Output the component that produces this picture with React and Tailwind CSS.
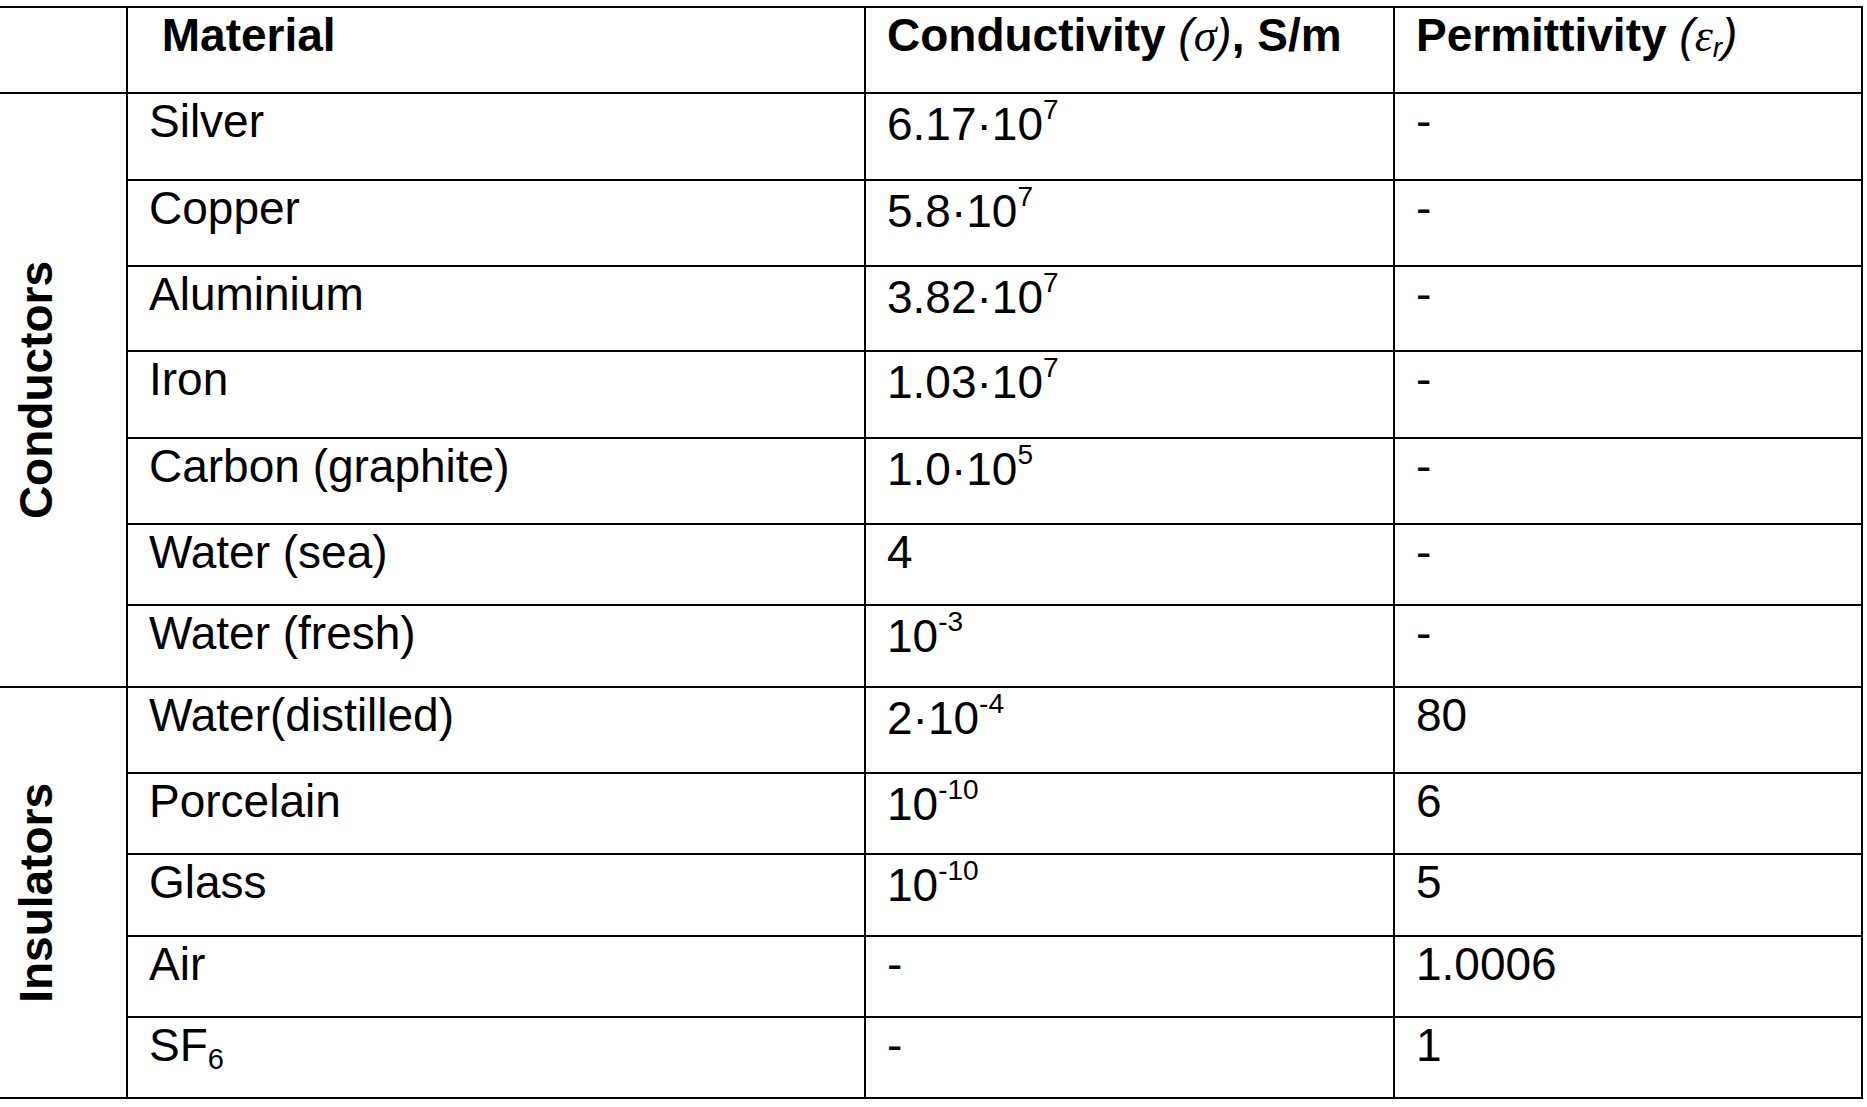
import React from "react";

const Sup = ({ children }) => <span className="text-[28px] align-[21px]">{children}</span>;

const conductors = [
  { name: "Silver", sigma: <>6.17·10<Sup>7</Sup></>, eps: "-", h: "h-[85px]" },
  { name: "Copper", sigma: <>5.8·10<Sup>7</Sup></>, eps: "-", h: "h-[84px]" },
  { name: "Aluminium", sigma: <>3.82·10<Sup>7</Sup></>, eps: "-", h: "h-[83px]" },
  { name: "Iron", sigma: <>1.03·10<Sup>7</Sup></>, eps: "-", h: "h-[85px]" },
  { name: "Carbon (graphite)", sigma: <>1.0·10<Sup>5</Sup></>, eps: "-", h: "h-[84px]" },
  { name: "Water (sea)", sigma: "4", eps: "-", h: "h-[79px]" },
  { name: "Water (fresh)", sigma: <>10<Sup>-3</Sup></>, eps: "-", h: "h-[80px]" },
];

const insulators = [
  { name: "Water(distilled)", sigma: <>2·10<Sup>-4</Sup></>, eps: "80", h: "h-[84px]" },
  { name: "Porcelain", sigma: <>10<Sup>-10</Sup></>, eps: "6", h: "h-[79px]" },
  { name: "Glass", sigma: <>10<Sup>-10</Sup></>, eps: "5", h: "h-[80px]" },
  { name: "Air", sigma: "-", eps: "1.0006", h: "h-[79px]" },
  { name: "SF6", sigma: "-", eps: "1", h: "h-[79px]", sub: true },
];

const cell = "bg-white pl-[21px] leading-[normal] whitespace-nowrap";

function Group({ label, rows, span }) {
  return (
    <>
      <div className={`bg-white flex items-center pl-[9px] ${span}`}>
        <span className="[writing-mode:vertical-rl] rotate-180 font-bold leading-[normal]">{label}</span>
      </div>
      {rows.map((r) => (
        <React.Fragment key={r.name}>
          <div className={`${cell} ${r.h}`}>
            {r.sub ? <>SF<span className="text-[29px] align-[-8px]">6</span></> : r.name}
          </div>
          <div className={cell}>{r.sigma}</div>
          <div className={cell}>{r.eps}</div>
        </React.Fragment>
      ))}
    </>
  );
}

export default function App() {
  return (
    <div className="min-h-screen bg-white text-black font-['Liberation_Sans',Arial,sans-serif] text-[46px]">
      <div className="pt-[6px]">
        <div className="grid w-[1863px] bg-black pt-[2px] pr-[2px] pb-[2px] gap-[2px] grid-cols-[126px_736px_527px_466px]">
          <div className="bg-white h-[84px]" />
          <div className={`${cell} font-bold`}>{"\u00a0"}Material</div>
          <div className={`${cell} font-bold`}>
            Conductivity <span className="font-normal italic">(</span>
            <span className="font-normal italic font-['Liberation_Serif',serif]">σ</span>
            <span className="font-normal italic">)</span>, S/m
          </div>
          <div className={`${cell} font-bold`}>
            Permittivity <span className="font-normal italic">(</span>
            <span className="font-normal italic font-['Liberation_Serif',serif]">ε</span>
            <span className="font-normal italic text-[28px] align-[-6px]">r</span>
            <span className="font-normal italic">)</span>
          </div>
          <Group label="Conductors" rows={conductors} span="row-span-7" />
          <Group label="Insulators" rows={insulators} span="row-span-5" />
        </div>
      </div>
    </div>
  );
}
